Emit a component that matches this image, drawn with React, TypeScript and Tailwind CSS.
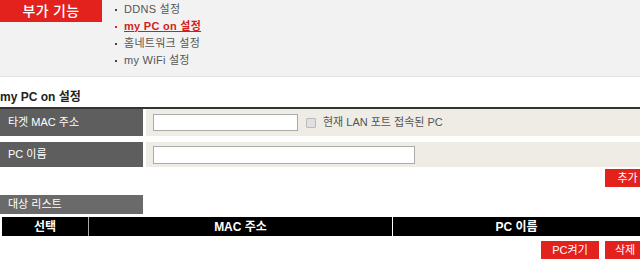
export default function App() {
  const font = { fontFamily: '"Liberation Sans", "Noto Sans CJK KR", sans-serif' }
  const menu = ['DDNS 설정', 'my PC on 설정', '홈네트워크 설정', 'my WiFi 설정']

  return (
    <div className="w-[640px] h-[274px] overflow-hidden bg-white text-[11px] text-[#333]" style={font}>
      {/* top sub menu */}
      <div className="flex h-[77px] bg-[#f2f2f2] border-b border-[#e6e6e6]">
        <div className="w-[102px] h-[22px] bg-[#e3211d] text-white text-[14px] font-medium flex items-center justify-center tracking-wide">
          부가 기능
        </div>
        <ul className="ml-[13px] pt-px">
          {menu.map((m, i) => (
            <li key={m} className="h-[17px] flex items-center gap-[7px]">
              <span className={`w-[2px] h-[2px] ${i === 1 ? 'bg-[#e3211d]' : 'bg-[#444]'}`} />
              <span
                className={
                  i === 1
                    ? 'text-[#d21e1e] font-bold underline tracking-wide'
                    : 'text-[#555] tracking-wide'
                }
              >
                {m}
              </span>
            </li>
          ))}
        </ul>
      </div>

      {/* title */}
      <div className="mt-[10px] h-[20px] flex items-center text-[12px] font-bold text-[#222]">my PC on 설정</div>
      <div className="h-[2px] bg-[#333]" />

      {/* form rows */}
      <div className="flex h-[27px]">
        <div className="w-[143px] bg-[#5e5e5e] text-white flex items-center pl-[8px]">타겟 MAC 주소</div>
        <div className="flex-1 ml-[3px] bg-[#eeece4] flex items-center pl-[7px]">
          <input className="w-[145px] h-[17px] bg-white border border-[#aaa]" />
          <span className="ml-[8px] w-[10px] h-[10px] border border-[#bbb] bg-[#e0e0e0] rounded-[1px]" />
          <span className="ml-[7px] text-[#555]">현재 LAN 포트 접속된 PC</span>
        </div>
      </div>
      <div className="flex h-[25px] mt-[6px]">
        <div className="w-[143px] bg-[#5e5e5e] text-white flex items-center pl-[8px]">PC 이름</div>
        <div className="flex-1 ml-[3px] bg-[#eeece4] flex items-center pl-[7px]">
          <input className="w-[262px] h-[18px] bg-white border border-[#aaa]" />
        </div>
      </div>
      <div className="flex justify-end mt-[2px] mr-[-8px]">
        <button className="w-[43px] h-[18px] bg-[#e3211d] text-white text-[11px] pl-[2px]">추가</button>
      </div>

      {/* list */}
      <div className="mt-[8px] w-[143px] h-[19px] bg-[#6a6a6a] text-white flex items-center pl-[8px]">대상 리스트</div>
      <div className="mt-[3px] ml-[2px] flex h-[19px] bg-black text-white text-[12px] font-bold">
        <div className="w-[87px] flex items-center justify-center border-r border-[#aaa]">선택</div>
        <div className="w-[304px] flex items-center justify-center border-r border-white">MAC 주소</div>
        <div className="flex-1 flex items-center justify-center">PC 이름</div>
      </div>
      <div className="flex justify-end gap-[6px] mt-[5px] mr-[-5px]">
        <button className="w-[58px] h-[18px] bg-[#e3211d] text-white text-[11px]">PC켜기</button>
        <button className="w-[40px] h-[18px] bg-[#e3211d] text-white text-[11px]">삭제</button>
      </div>
    </div>
  )
}
